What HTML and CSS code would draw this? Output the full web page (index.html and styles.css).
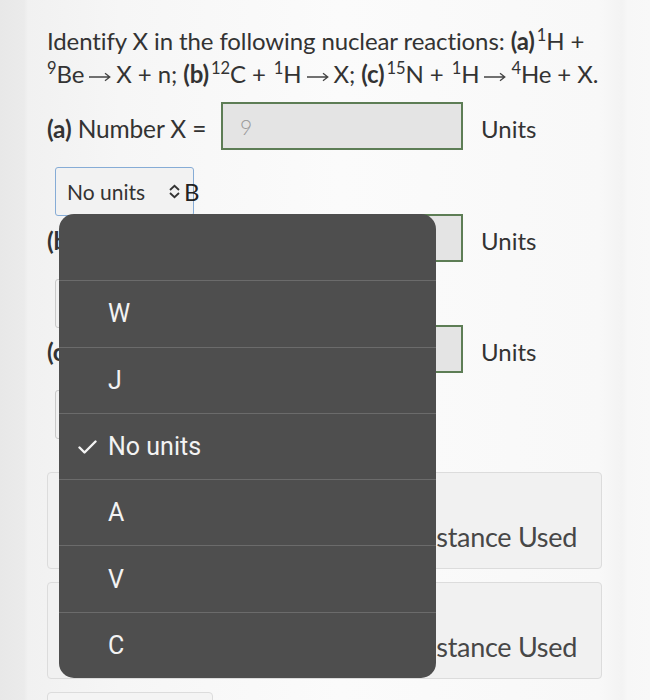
FILE: index.html
```html
<!DOCTYPE html>
<html lang="en">
<head>
<meta charset="utf-8">
<title>Nuclear reactions</title>
<link rel="stylesheet" href="styles.css">
</head>
<body>
<div class="page">
  <p class="question">Identify X in the following nuclear reactions: <b>(a)</b><sup>1</sup>H +<br><sup class="first">9</sup>Be<svg class="arr" width="22" height="10" viewBox="0 0 22 10"><path d="M0 5H20.5M16 1.2L20.8 5L16 8.8" fill="none" stroke="#444" stroke-width="1.3"/></svg>X + n; <b>(b)</b><sup>12</sup>C + <sup>1</sup>H<svg class="arr" width="22" height="10" viewBox="0 0 22 10"><path d="M0 5H20.5M16 1.2L20.8 5L16 8.8" fill="none" stroke="#444" stroke-width="1.3"/></svg>X; <b>(c)</b><sup>15</sup>N + <sup>1</sup>H<svg class="arr" width="22" height="10" viewBox="0 0 22 10"><path d="M0 5H20.5M16 1.2L20.8 5L16 8.8" fill="none" stroke="#444" stroke-width="1.3"/></svg><sup class="first">4</sup>He + X.</p>

  <div class="part">
    <div class="row">
      <span class="label"><b>(a)</b> Number X =</span>
      <div class="input"><span class="ph">9</span></div>
      <span class="units">Units</span>
    </div>
    <div class="select"><span>No units</span>
      <svg class="chev" width="13" height="15" viewBox="0 0 13 15"><polyline points="2,6 6.5,1.8 11,6" fill="none" stroke="#333" stroke-width="1.8"/><polyline points="2,9 6.5,13.2 11,9" fill="none" stroke="#333" stroke-width="1.8"/></svg><span class="clip">B</span>
    </div>
  </div>

  <div class="part">
    <div class="row">
      <span class="label"><b>(b)</b> Number X =</span>
      <div class="input"></div>
      <span class="units">Units</span>
    </div>
    <div class="select dim"><span>No units</span></div>
  </div>

  <div class="part">
    <div class="row">
      <span class="label"><b>(c)</b> Number X =</span>
      <div class="input"></div>
      <span class="units">Units</span>
    </div>
    <div class="select dim"><span>No units</span></div>
  </div>

  <div class="buttons">
    <div class="btn"><span>Hint Assistance Used</span></div>
    <div class="btn"><span>Guided Solution Assistance Used</span></div>
    <div class="btn small"></div>
  </div>
</div>

<div class="menu">
  <div class="opt"></div>
  <div class="opt">W</div>
  <div class="opt">J</div>
  <div class="opt checked"><svg class="check" width="19" height="14" viewBox="0 0 19 14"><polyline points="1.5,7.5 6.5,12.5 17.5,1.5" fill="none" stroke="#f4f4f4" stroke-width="2.4" stroke-linecap="round" stroke-linejoin="round"/></svg>No units</div>
  <div class="opt">A</div>
  <div class="opt">V</div>
  <div class="opt">C</div>
</div>
</body>
</html>
```

FILE: styles.css
```css
html, body {
  margin: 0;
  padding: 0;
}
body {
  width: 650px;
  height: 700px;
  overflow: hidden;
  position: relative;
  font-family: Lato, "Liberation Sans", sans-serif;
  color: #333;
  background: linear-gradient(to right, #e8e8e8 0, #ebebeb 24px, #f1f1f1 28px, #f6f6f6 120px, #fbfbfb 340px, #f8f8f8 600px, #f3f3f3 622px, #f7f7f7 628px, #f8f8f8 650px);
}
.page {
  padding: 24px 0 0 47px;
  width: 570px;
}
.question {
  margin: 0;
  font-size: 24px;
  line-height: 33px;
  letter-spacing: -0.1px;
  color: #333;
  white-space: nowrap;
}
.question b {
  font-weight: 700;
}
.question sup {
  font-size: 16.5px;
  line-height: 0;
  vertical-align: 9px;
  margin-left: 2px;
}
.question sup.first {
  margin-left: 0;
}
.arr {
  display: inline-block;
  vertical-align: 1px;
  margin: 0 5px 0 5px;
}
.part:first-of-type {
  margin-top: 12px;
}
.row {
  display: flex;
  align-items: center;
  height: 48px;
}
.label {
  width: 160px;
  margin-right: 14px;
  padding-top: 5px;
  font-size: 24.5px;
  white-space: nowrap;
  letter-spacing: -0.15px;
}
.input {
  border: 2px solid #5d7d55;
  background: #e4e4e4;
  display: flex;
  align-items: center;
  padding-left: 17px;
  box-sizing: border-box;
  width: 242px;
  height: 48px;
}
.ph {
  font-size: 21px;
  color: #9a9a9a;
  font-weight: 300;
}
.units {
  margin-left: 18px;
  padding-top: 5px;
  font-size: 24px;
}
.select {
  margin: 17px 0 -2.5px 8px;
  width: 139px;
  height: 49px;
  box-sizing: border-box;
  border: 1.5px solid #86acd6;
  border-radius: 3px;
  background: #f2f2f2;
  display: flex;
  align-items: center;
  padding-left: 11px;
  font-size: 21px;
  color: #333;
  white-space: nowrap;
  overflow: visible;
}
.select.dim {
  border-color: #c9c9c9;
  background: #f0f0f0;
}
.chev {
  margin-left: 23px;
  flex: none;
}
.clip {
  font-size: 24px;
  margin-left: 3px;
  color: #222;
}
.buttons {
  margin-top: 35px;
  display: flex;
  flex-direction: column;
  gap: 13px;
}
.btn {
  width: 555px;
  height: 97px;
  flex: none;
  box-sizing: border-box;
  border: 1.5px solid #dcdcdc;
  border-radius: 4px;
  background: #f1f1f1;
  display: flex;
  justify-content: flex-end;
  align-items: flex-end;
  padding: 0 24px 15px 0;
  font-size: 27px;
  color: #474747;
  letter-spacing: -0.3px;
  white-space: nowrap;
}
.btn.small {
  width: 166px;
  background: #f4f4f4;
}
.menu {
  position: absolute;
  left: 59px;
  top: 214px;
  width: 377px;
  height: 464px;
  border-radius: 15px;
  background: #4e4e4e;
  overflow: hidden;
  font-family: Roboto, "Noto Sans", sans-serif;
  font-size: 25px;
  color: #f3f3f3;
}
.opt {
  height: 66.3px;
  box-sizing: border-box;
  border-top: 1px solid #6b6b6b;
  display: flex;
  align-items: center;
  padding-left: 49px;
}
.opt:first-child {
  border-top: none;
}
.opt.checked {
  padding-left: 19px;
}
.check {
  margin-right: 11px;
  flex: none;
}
```
